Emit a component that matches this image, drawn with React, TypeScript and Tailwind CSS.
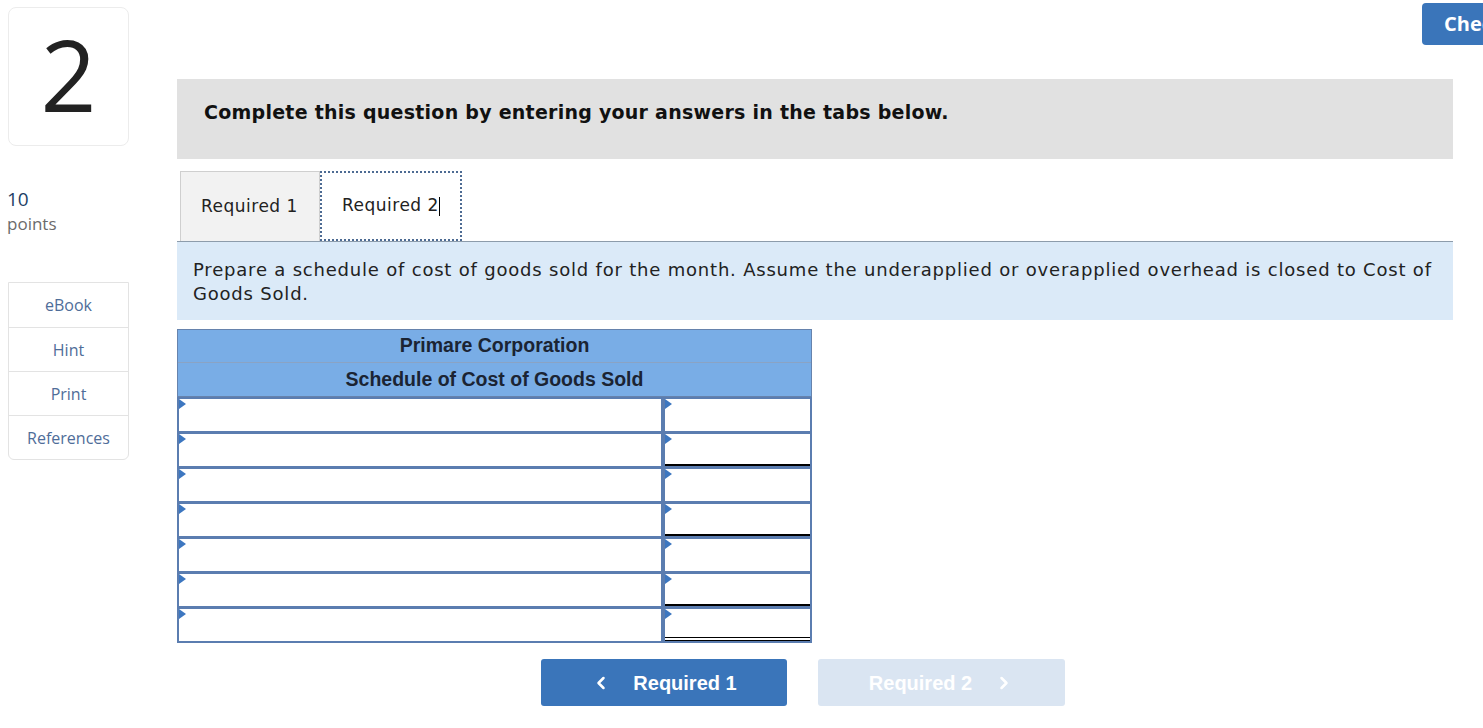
import { ChevronLeft, ChevronRight } from 'lucide-react';

const rows = [
	{ rightBottom: '' },
	{ rightBottom: 'border-b-2 border-b-black' },
	{ rightBottom: '' },
	{ rightBottom: 'border-b-2 border-b-black' },
	{ rightBottom: '' },
	{ rightBottom: 'border-b-2 border-b-black' },
	{ rightBottom: 'border-b-4 border-double border-b-black' },
];

function Marker() {
	return (
		<span className="absolute left-0 top-0 h-0 w-0 border-y-[5px] border-l-[7px] border-y-transparent border-l-[#3d77c0]" />
	);
}

function Sidebar() {
	const links = ['eBook', 'Hint', 'Print', 'References'];
	return (
		<aside className="w-[177px] shrink-0 pl-[7px] font-['Open_Sans',sans-serif]">
			<div className="ml-[1px] mt-[7px] flex h-[139px] w-[121px] items-center justify-center rounded-lg border border-[#ececec] pb-[6px]">
				<span className="text-[98px] font-normal leading-none text-[#222]">2</span>
			</div>
			<div className="mt-[42px] text-[19px] leading-[22px] text-[#1d3f66]">10</div>
			<div className="mt-[3px] text-[17px] leading-[22px] text-[#6b6b6b]">points</div>
			<div className="ml-[1px] mt-[47px] w-[121px] rounded-b-md border border-[#e3e3e3] text-[16px] text-[#4f6d99]">
				{links.map((label, i) => (
					<div
						key={label}
						className={`flex h-[44px] items-center justify-center ${i > 0 ? 'border-t border-[#e3e3e3]' : ''}`}
					>
						{label}
					</div>
				))}
			</div>
		</aside>
	);
}

export default function App() {
	return (
		<div className="flex h-[728px] w-[1483px] overflow-hidden bg-white">
			<Sidebar />
			<main className="w-[1276px] shrink-0">
				<div className="h-[79px] pl-[1245px] pt-[3px]">
					<button className="flex h-[42px] w-[100px] items-center whitespace-nowrap rounded-[4px] bg-[#3a75ba] pl-[22px] font-['Open_Sans',sans-serif] text-[20px] font-bold text-white">
						Check
					</button>
				</div>

				<div className="h-[80px] bg-[#e1e1e1] pl-[27px] pt-[21px] font-['DejaVu_Sans',sans-serif] text-[19px] font-bold leading-[24px] tracking-[0.25px] text-[#111]">
					Complete this question by entering your answers in the tabs below.
				</div>

				<div className="mt-[12px] flex border-b border-[#8d9cab] pl-[3px] font-['DejaVu_Sans',sans-serif] text-[17px] tracking-[0.5px] text-[#222]">
					<div className="flex h-[70px] w-[140px] items-center border border-b-0 border-[#cfcfcf] bg-[#f2f2f2] pl-[20px]">
						Required 1
					</div>
					<div className="flex h-[70px] w-[142px] items-center border-2 border-dotted border-[#4d6b93] bg-white pl-[20px]">
						Required 2<span className="h-[19px] w-px bg-black" />
					</div>
				</div>

				<div className="bg-[#dbeaf8] pb-[14px] pl-[16px] pr-[16px] pt-[16px] font-['DejaVu_Sans',sans-serif] text-[18px] leading-[24px] tracking-[0.8px] text-[#222]">
					Prepare a schedule of cost of goods sold for the month. Assume the underapplied or overapplied overhead is
					closed to Cost of Goods Sold.
				</div>

				<div className="mt-[9px] w-[635px] font-['Liberation_Sans',Arial,sans-serif]">
					<div className="border border-[#6683ad] bg-[#79ade6] text-[19.5px] font-bold text-[#1b2433]">
						<div className="flex h-[33px] items-center justify-center border-b border-[#8aa3c4]">Primare Corporation</div>
						<div className="flex h-[33px] items-center justify-center">Schedule of Cost of Goods Sold</div>
					</div>
					<div className="grid grid-cols-[482px_1fr] gap-x-[4px] gap-y-[3px] bg-[#5b7db0] p-[2px]">
						{rows.map((row, i) => (
							<div key={i} className="contents">
								<div className="relative h-[32px] bg-white">
									<Marker />
								</div>
								<div className={`relative h-[32px] bg-white ${row.rightBottom}`}>
									<Marker />
								</div>
							</div>
						))}
					</div>
				</div>

				<div className="ml-[364px] mt-[16px] flex gap-[31px] font-['Liberation_Sans',Arial,sans-serif] text-[20px] font-bold text-white">
					<button className="flex h-[47px] w-[246px] items-center justify-center gap-[22px] rounded-[3px] bg-[#3a75ba]">
						<ChevronLeft size={20} strokeWidth={3} />
						<span>Required 1</span>
					</button>
					<button className="flex h-[47px] w-[247px] items-center justify-center gap-[22px] rounded-[3px] bg-[#dae5f2]">
						<span>Required 2</span>
						<ChevronRight size={20} strokeWidth={3} />
					</button>
				</div>
			</main>
		</div>
	);
}
